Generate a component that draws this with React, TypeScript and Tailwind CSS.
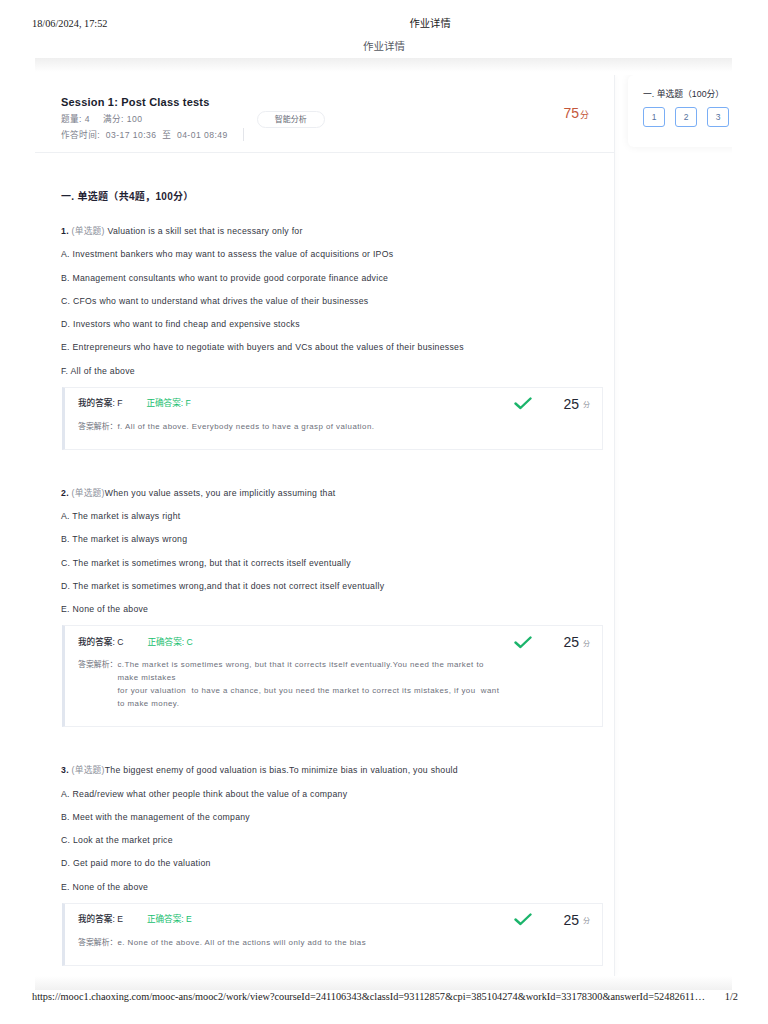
import React from 'react'

const sans = '"Liberation Sans", "Noto Sans CJK SC", Arial, sans-serif'
const serif = '"Liberation Serif", "Noto Sans CJK SC", serif'

type Question = {
  no: number
  text: string
  options: string[]
  mine: string
  right: string
  analysis: string[]
}

const questions: Question[] = [
  {
    no: 1,
    text: ' Valuation is a skill set that is necessary only for',
    options: [
      'A. Investment bankers who may want to assess the value of acquisitions or IPOs',
      'B. Management consultants who want to provide good corporate finance advice',
      'C. CFOs who want to understand what drives the value of their businesses',
      'D. Investors who want to find cheap and expensive stocks',
      'E. Entrepreneurs who have to negotiate with buyers and VCs about the values of their businesses',
      'F. All of the above',
    ],
    mine: 'F',
    right: 'F',
    analysis: ['f. All of the above. Everybody needs to have a grasp of valuation.'],
  },
  {
    no: 2,
    text: 'When you value assets, you are implicitly assuming that',
    options: [
      'A. The market is always right',
      'B. The market is always wrong',
      'C. The market is sometimes wrong, but that it corrects itself eventually',
      'D. The market is sometimes wrong,and that it does not correct itself eventually',
      'E. None of the above',
    ],
    mine: 'C',
    right: 'C',
    analysis: [
      'c.The market is sometimes wrong, but that it corrects itself eventually.You need the market to',
      'make mistakes',
      'for your valuation  to have a chance, but you need the market to correct its mistakes, if you  want',
      'to make money.',
    ],
  },
  {
    no: 3,
    text: 'The biggest enemy of good valuation is bias.To minimize bias in valuation, you should',
    options: [
      'A. Read/review what other people think about the value of a company',
      'B. Meet with the management of the company',
      'C. Look at the market price',
      'D. Get paid more to do the valuation',
      'E. None of the above',
    ],
    mine: 'E',
    right: 'E',
    analysis: ['e. None of the above. All of the actions will only add to the bias'],
  },
]

function Check() {
  return (
    <svg width="18" height="13" viewBox="0 0 18 13" fill="none">
      <path d="M1.5 6.5 L6.5 11 L16.5 1.5" stroke="#1bb46b" strokeWidth="2.4" strokeLinecap="round" strokeLinejoin="round" />
    </svg>
  )
}

function QuestionBlock({ q, first }: { q: Question; first: boolean }) {
  return (
    <div className={first ? 'mt-[20px]' : 'mt-[36px]'}>
      <div className="flex flex-col gap-[9.3px] text-[8.7px] leading-[14px] text-[#33363f] tracking-[0.28px]">
        <div>
          <span className="font-bold text-[#1f2233]">{q.no}. </span>
          <span className="text-[#8c8f9a]">(单选题)</span>
          {q.text}
        </div>
        {q.options.map((o) => (
          <div key={o}>{o}</div>
        ))}
      </div>
      <div className="mt-[9px] ml-px border border-[#eef0f4] border-l-[3px] border-l-[#e1e6ef] pl-[13px] pr-[12px] pt-[10px] pb-[16px]">
        <div className="flex items-center h-[12px] text-[8.6px]">
          <span className="text-[#2b2e3a] font-medium">我的答案: {q.mine}</span>
          <span className="ml-[24px] text-[#16be6e]">正确答案: {q.right}</span>
          <span className="ml-auto mr-[31px] flex items-center"><Check /></span>
          <span className="text-[14px] text-[#232633] leading-[12px]">25</span>
          <span className="ml-[4px] text-[7px] text-[#8c8f9a] mt-[3px]">分</span>
        </div>
        <div className="mt-[10px] flex text-[7.9px] leading-[13px] text-[#6c6f7a] tracking-[0.45px]">
          <span className="shrink-0 tracking-[0px]">答案解析：</span>
          <div>
            {q.analysis.map((l, i) => (
              <div key={i} className="whitespace-pre">{l}</div>
            ))}
          </div>
        </div>
      </div>
    </div>
  )
}

export default function App() {
  return (
    <div className="w-[768px] h-[1024px] bg-white overflow-hidden flex flex-col" style={{ fontFamily: sans }}>
      {/* print header */}
      <div className="flex pt-[18px] pl-[32px] text-[10.3px] leading-[12px] text-[#222]" style={{ fontFamily: serif }}>
        <span>18/06/2024, 17:52</span>
        <span className="ml-[302px]">作业详情</span>
      </div>

      <div className="mt-[10px] text-center text-[10.5px] leading-[12px] text-[#55585f]">作业详情</div>

      <div className="mt-[6px] ml-[35px] w-[697px] h-[14px] bg-gradient-to-b from-[#efefef] to-white" />

      {/* content */}
      <div className="mt-[3px] ml-[35px] w-[697px] flex-1 flex overflow-hidden">
        {/* main card */}
        <div className="w-[580px] shrink-0 border-r border-[#eef0f3] shadow-[0_0_6px_rgba(0,0,0,0.03)]">
          <div className="h-[78px] border-b border-[#eef0f3] flex pl-[26px] pr-[25px]">
            <div className="pt-[20px]">
              <div className="text-[11px] leading-[14px] font-bold text-[#1a1d2e] tracking-[0.2px]">Session 1: Post Class tests</div>
              <div className="mt-[4px] text-[8.6px] leading-[12px] text-[#7d808c] tracking-[0.45px]">
                <span>题量: 4</span>
                <span className="ml-[13px]">满分: 100</span>
              </div>
              <div className="mt-[3px] flex items-center text-[8.6px] leading-[12px] text-[#7d808c] tracking-[0.45px]">
                <span className="whitespace-pre">作答时间:  03-17 10:36  至  04-01 08:49</span>
                <span className="ml-[15px] h-[13px] border-l border-[#e3e5ea]" />
              </div>
            </div>
            <div className="ml-[13px] mt-[36px] h-[17px] w-[68px] rounded-full border border-[#eceef2] flex items-center justify-center text-[8px] text-[#666a75]">
              智能分析
            </div>
            <div className="ml-auto mt-[30px] flex items-baseline h-[16px] text-[#c4573a]">
              <span className="text-[14px] leading-[16px]">75</span>
              <span className="ml-[1px] text-[9px]">分</span>
            </div>
          </div>

          <div className="pl-[26px] pr-[11px]">
            <div className="pt-[37px] text-[10px] leading-[14px] font-bold text-[#1f2233] tracking-[0.3px]">
              一. 单选题（共4题，100分）
            </div>
            {questions.map((q, i) => (
              <QuestionBlock key={q.no} q={q} first={i === 0} />
            ))}
          </div>
        </div>

        {/* right nav card */}
        <div className="ml-[13px] self-start w-[120px] shrink-0 h-[72px] rounded-[6px] shadow-[0_0_8px_rgba(0,0,0,0.06)] pl-[15px] pt-[13px]">
          <div className="text-[8.8px] leading-[12px] text-[#2b2e3a]">一. 单选题（100分）</div>
          <div className="mt-[7px] flex gap-[10px]">
            {['1', '2', '3'].map((n) => (
              <div key={n} className="w-[22px] h-[20px] rounded-[3px] border border-[#7aaef5] flex items-center justify-center text-[8.5px] text-[#56729e]">
                {n}
              </div>
            ))}
          </div>
        </div>
      </div>

      <div className="ml-[35px] w-[697px] h-[14px] bg-gradient-to-t from-[#f1f1f1] to-white" />

      {/* print footer */}
      <div className="flex justify-between pl-[32px] pr-[30px] pt-[1px] pb-[21px] text-[10.3px] leading-[12px] text-[#222]" style={{ fontFamily: serif }}>
        <span>https://mooc1.chaoxing.com/mooc-ans/mooc2/work/view?courseId=241106343&amp;classId=93112857&amp;cpi=385104274&amp;workId=33178300&amp;answerId=52482611…</span>
        <span>1/2</span>
      </div>
    </div>
  )
}
